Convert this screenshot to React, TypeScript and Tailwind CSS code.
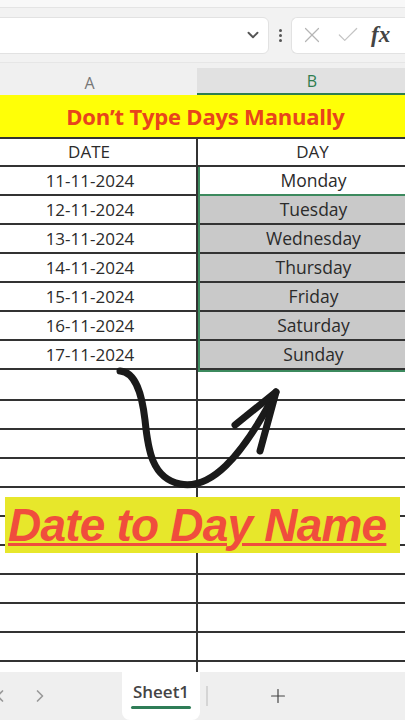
import { ChevronDown, X, Check, ChevronLeft, ChevronRight, Plus } from 'lucide-react';

const rows = [
    { date: '11-11-2024', day: 'Monday' },
    { date: '12-11-2024', day: 'Tuesday' },
    { date: '13-11-2024', day: 'Wednesday' },
    { date: '14-11-2024', day: 'Thursday' },
    { date: '15-11-2024', day: 'Friday' },
    { date: '16-11-2024', day: 'Saturday' },
    { date: '17-11-2024', day: 'Sunday' },
];

const cellFont = { fontFamily: '"Open Sans", "Liberation Sans", sans-serif' };

export default function App() {
    return (
        <div className="relative w-[405px] h-[720px] overflow-hidden bg-white flex flex-col" style={cellFont}>
            {/* Formula bar */}
            <div className="h-[8px] shrink-0 bg-[#f8f8f8] border-b border-[#e4e4e4]" />
            <div className="h-[54px] shrink-0 bg-[#f2f2f2] flex items-center gap-2">
                <div className="ml-[-6px] w-[275px] h-[37px] bg-white rounded-md border border-[#e2e2e2] flex items-center justify-end pr-[6px]">
                    <ChevronDown size={18} strokeWidth={2.5} className="text-[#555]" />
                </div>
                <div className="flex flex-col gap-[2px] items-center w-[6px]">
                    <span className="w-[3px] h-[3px] rounded-full bg-[#555]" />
                    <span className="w-[3px] h-[3px] rounded-full bg-[#555]" />
                    <span className="w-[3px] h-[3px] rounded-full bg-[#555]" />
                </div>
                <div className="flex-1 h-[37px] bg-white rounded-l-md border border-r-0 border-[#e2e2e2] flex items-center gap-[10px] pl-[7px]">
                    <X size={26} strokeWidth={1.1} className="text-[#b5b5b5]" />
                    <Check size={26} strokeWidth={1.1} className="text-[#c4c4c4]" />
                    <span className="text-[23px] italic font-bold text-[#444]" style={{ fontFamily: '"Liberation Serif", serif' }}>fx</span>
                </div>
            </div>

            {/* Column headers */}
            <div className="h-[33px] shrink-0 bg-[#f0f0f0] flex items-end border-t border-[#e6e6e6]">
                <div className="w-[197px] h-full flex items-center justify-center pt-2 pr-[18px] text-[16px] text-[#777]">A</div>
                <div className="flex-1 h-[27px] bg-[#e1e1e1] border-b-2 border-[#2f7d4f] flex items-center justify-center pl-[22px] text-[16px] text-[#2f7d4f]">B</div>
            </div>

            {/* Grid */}
            <div className="relative flex-1 min-h-0 overflow-hidden flex flex-col">
                <div className="h-[44px] shrink-0 bg-[#ffff07] border-b-2 border-[#333] flex items-center justify-center pl-[6px]">
                    <span className="text-[22px] font-bold text-[#e8441c] tracking-[-0.2px]">Don’t Type Days Manually</span>
                </div>
                <div className="h-[28px] shrink-0 flex border-b-2 border-[#333] text-[17px] text-[#2b2b2b]">
                    <div className="w-[198px] flex items-center justify-center pr-[18px] border-r-2 border-[#333]">DATE</div>
                    <div className="flex-1 flex items-center justify-center pl-[22px]">DAY</div>
                </div>
                <div className="flex shrink-0">
                    <div className="w-[198px] flex flex-col border-r-2 border-[#333]">
                        {rows.map((r) => (
                            <div key={r.date} className="h-[29px] border-b-2 border-[#333] flex items-center justify-center pr-[16px] text-[17px] text-[#2b2b2b]">
                                {r.date}
                            </div>
                        ))}
                    </div>
                    <div className="flex-1 flex flex-col border-2 border-t-0 border-r-0 border-[#3c8a5e]">
                        {rows.map((r, i) => (
                            <div
                                key={r.day}
                                className={`h-[29px] flex items-center justify-center pl-[22px] text-[17.5px] text-[#2b2b2b] ${i === 0 ? 'bg-white border-b-2 border-[#3c8a5e]' : 'bg-[#c9c9c9] border-b-2 border-[#333]'} ${i === rows.length - 1 ? 'border-b-0' : ''}`}
                            >
                                {r.day}
                            </div>
                        ))}
                    </div>
                </div>
                {Array.from({ length: 11 }).map((_, i) => (
                    <div key={i} className="h-[29px] flex border-b-2 border-[#333] shrink-0">
                        <div className="w-[198px] border-r-2 border-[#333]" />
                        <div className="flex-1" />
                    </div>
                ))}
            </div>

            {/* Sheet tabs */}
            <div className="h-[48px] shrink-0 bg-[#efefef] flex items-stretch z-10">
                <div className="w-[122px] flex items-center gap-5 text-[#999]">
                    <ChevronLeft size={20} className="ml-[-10px]" />
                    <ChevronRight size={20} />
                </div>
                <div className="w-[78px] bg-white rounded-b-lg flex flex-col items-center justify-center">
                    <span className="text-[17px] font-semibold text-[#444] leading-none">Sheet1</span>
                    <span className="mt-[6px] w-[60px] h-[3px] rounded bg-[#2f7d57]" />
                </div>
                <div className="w-[2px] my-[14px] ml-[6px] bg-[#d5d5d5]" />
                <div className="w-[140px] flex items-center justify-center">
                    <Plus size={22} strokeWidth={1.3} className="text-[#444]" />
                </div>
            </div>

            {/* Overlays */}
            <svg className="absolute left-0 top-0 pointer-events-none" width="405" height="720" viewBox="0 0 405 720">
                <path
                    d="M120 371 C 136 372, 142 395, 145 420 C 148 450, 152 478, 180 484 C 210 490, 240 460, 276 392"
                    fill="none"
                    stroke="#1a1a1a"
                    strokeWidth="7"
                    strokeLinecap="round"
                    strokeLinejoin="round"
                />
                <path d="M235 425 L 276 392 L 260 451" fill="none" stroke="#1a1a1a" strokeWidth="7" strokeLinecap="round" strokeLinejoin="round" />
            </svg>
            <div className="absolute left-[5px] top-[497px] w-[395px] h-[56px] bg-[#e7e72b] flex items-center pl-[3px]">
                <span
                    className="text-[46px] font-bold italic text-[#f04d3d] underline decoration-[3px] underline-offset-[2px] leading-none tracking-[-0.8px]"
                    style={{ fontFamily: '"Liberation Sans", Arial, sans-serif' }}
                >
                    Date to Day Name
                </span>
            </div>
        </div>
    );
}
